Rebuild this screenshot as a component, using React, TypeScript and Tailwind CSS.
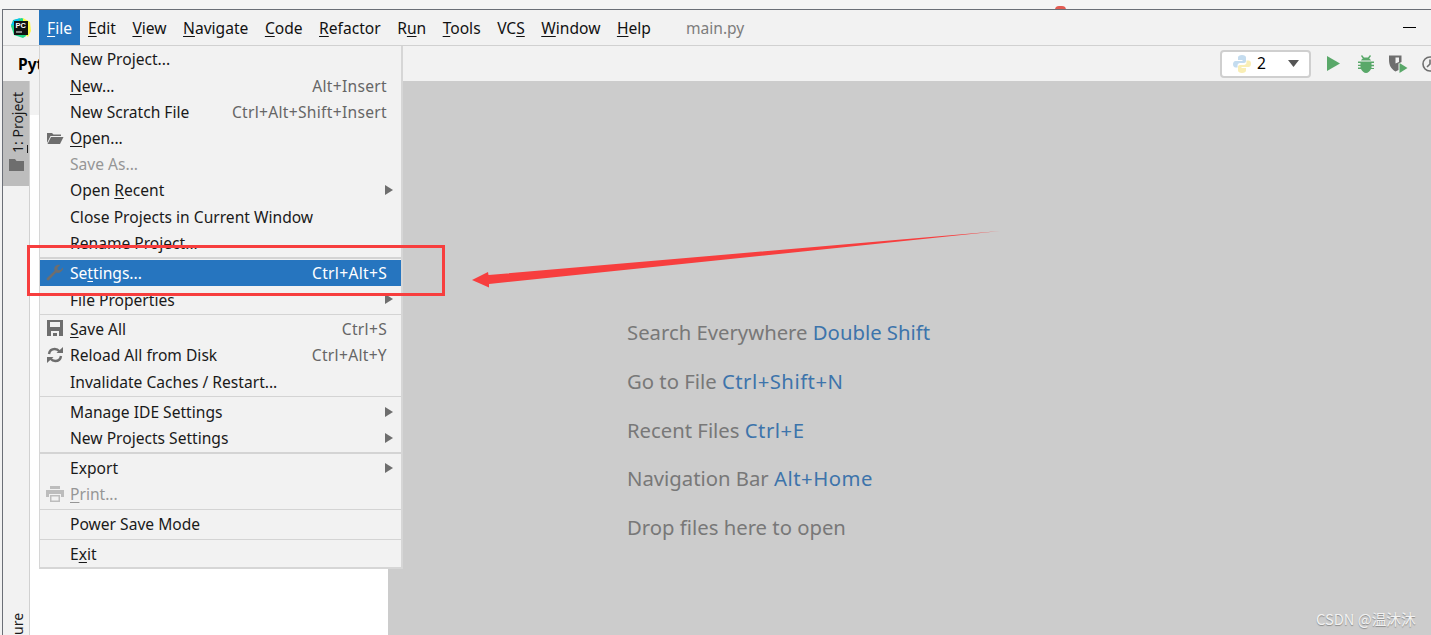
import React from 'react';

type Item = {
  label: React.ReactNode;
  shortcut?: string;
  arrow?: boolean;
  disabled?: boolean;
  active?: boolean;
  icon?: React.ReactNode;
  h: string;
};

type Group = {
  className: string;
  items: Item[];
};

const U = ({ children }: { children: React.ReactNode }) => (
  <span className="underline underline-offset-2">{children}</span>
);

const FolderOpen = () => (
  <svg width="18" height="14" viewBox="0 0 18 14" fill="#6e6e6e">
    <path d="M1 2h5l1.500 1.500H15V5H4.500L1 12z" />
    <path d="M5 6h12.500L14 13H1.500z" />
  </svg>
);

const Wrench = () => (
  <svg width="18" height="18" viewBox="0 0 18 18" fill="#6e6e6e">
    <path d="M17 3.600 14.200 6.300l-2.400-.2-.3-2.400L14.300 1c-2-.6-4.200 0-5.300 1.600-.9 1.300-1 2.800-.4 4.100L1 14.100c-.6.700-.5 1.500 0 2s1.400.6 2-.1l7.300-7.400c1.400.6 3 .4 4.300-.5 1.600-1.200 2.900-2.600 2.400-4.500z" />
  </svg>
);

const Floppy = () => (
  <svg width="16" height="16" viewBox="0 0 16 16" fill="#6e6e6e">
    <path d="M0 0h16v16H0z" />
    <path d="M3 2h10v5H3z" fill="#f2f2f2" />
    <path d="M4 11h8v5H4z" fill="#f2f2f2" />
    <path d="M6 13h4v3H6z" fill="#6e6e6e" />
  </svg>
);

const Reload = () => (
  <svg width="16" height="16" viewBox="0 0 16 16" fill="none" stroke="#6e6e6e" strokeWidth="2.400">
    <path d="M2 7c.4-3 2.800-5 5.800-5 1.900 0 3.400.8 4.600 2.200" />
    <path d="M14 9c-.4 3-2.800 5-5.800 5-1.900 0-3.400-.8-4.600-2.200" />
    <path d="M9.500 6H16V0z" fill="#6e6e6e" stroke="none" />
    <path d="M6.500 10H0v6z" fill="#6e6e6e" stroke="none" />
  </svg>
);

const Printer = () => (
  <svg width="18" height="16" viewBox="0 0 18 16" fill="#bdbdbd">
    <path d="M4 0h10v3H4z" />
    <path d="M0 4h18v7h-3V8H3v3H0z" />
    <path d="M4 9h10v7H4zM5.500 10.500v4h7v-4z" fillRule="evenodd" />
  </svg>
);

const PyCharmLogo = () => (
  <svg width="20" height="22" viewBox="0 0 20 22">
    <path d="M2 3 11 1l8 5-1 11-6 4-9-3-3-9z" fill="#21d789" />
    <path d="M12 1l7 4 1 9-3 6-5-4z" fill="#fcf84a" />
    <path d="M0 8l3-5 6-2-3 8z" fill="#07c3f2" />
    <path d="M3 4h14v14H3z" fill="#111" />
    <text x="4.500" y="10.500" fontSize="7.500" fontWeight="700" fill="#fff" fontFamily="'Liberation Sans', sans-serif">
      PC
    </text>
    <path d="M5 14.500h6v1H5z" fill="#fff" />
  </svg>
);

const PythonIcon = () => (
  <svg width="18" height="18" viewBox="0 0 18 18">
    <path d="M9 0C6.500 0 5 1 5 2.500V5h4.500v1H2.500C1 6 0 7.300 0 9.300S1 12.500 2.500 12.500H4.500V10.500C4.500 9 5.700 8 7 8h4c1.200 0 2-.9 2-2V2.500C13 1 11.500 0 9 0z" fill="#c4dcef" />
    <path d="M9 18c2.500 0 4-1 4-2.500V13H8.500v-1h7c1.500 0 2.500-1.300 2.500-3.300S17 5.500 15.500 5.500H13.500V7.500C13.500 9 12.300 10 11 10H7c-1.200 0-2 .9-2 2v3.500C5 17 6.500 18 9 18z" fill="#f9eeb5" />
  </svg>
);

const Bug = () => (
  <svg width="16" height="18" viewBox="0 0 16 18" fill="#59a869">
    <path d="M4 0l2 2.500h4L12 0l1 1-1.800 2.500c1 .5 1.600 1.200 1.800 2H3c.2-.8.8-1.500 1.800-2L3 1z" />
    <path d="M0 6.500h16v1.600h-2.500v1.600H16v1.600h-2.500v1.600H16V14h-3c-1 2.200-3 4-5 4s-4-1.800-5-4H0v-1.500h2.500v-1.600H0V9.700h2.500V8.100H0z" />
  </svg>
);

const Coverage = () => (
  <svg width="19" height="20" viewBox="0 0 19 20">
    <path d="M0 1.500h12.500V8l-3 1.500V16l-3 1.500C2 15 0 11 0 6z" fill="#6e6e6e" />
    <path d="M6.500 3.500H10V8L6.500 9.500z" fill="#f2f2f2" />
    <path d="M10.500 9l8 5-8 5z" fill="#59a869" />
  </svg>
);

const menuGroups: Group[] = [
  {
    className: '',
    items: [
      { label: 'New Project...', h: 'h-[26.2px]' },
      { label: <><U>N</U>ew...</>, shortcut: 'Alt+Insert', h: 'h-[26.2px]' },
      { label: 'New Scratch File', shortcut: 'Ctrl+Alt+Shift+Insert', h: 'h-[26.2px]' },
      { label: <><U>O</U>pen...</>, icon: <FolderOpen />, h: 'h-[26.2px]' },
      { label: 'Save As...', disabled: true, h: 'h-[26.2px]' },
      { label: <>Open <U>R</U>ecent</>, arrow: true, h: 'h-[26.2px]' },
      { label: 'Close Projects in Current Window', h: 'h-[26.2px]' },
      { label: 'Rename Project...', h: 'h-[26.2px]' },
    ],
  },
  {
    className: 'mt-[1.400px] border-t-2 pt-[1px]',
    items: [
      { label: <>Se<U>t</U>tings...</>, shortcut: 'Ctrl+Alt+S', active: true, icon: <Wrench />, h: 'h-[26px]' },
      { label: 'File Properties', arrow: true, h: 'h-[27px]' },
    ],
  },
  {
    className: 'mt-[1px] border-t',
    items: [
      { label: <><U>S</U>ave All</>, shortcut: 'Ctrl+S', icon: <Floppy />, h: 'h-[27px]' },
      { label: 'Reload All from Disk', shortcut: 'Ctrl+Alt+Y', icon: <Reload />, h: 'h-[26px]' },
      { label: 'Invalidate Caches / Restart...', h: 'h-[28px]' },
    ],
  },
  {
    className: 'border-t pt-[2px]',
    items: [
      { label: 'Manage IDE Settings', arrow: true, h: 'h-[26px]' },
      { label: 'New Projects Settings', arrow: true, h: 'h-[26px]' },
    ],
  },
  {
    className: 'mt-[1px] border-t-2 pt-[1px]',
    items: [
      { label: 'Export', arrow: true, h: 'h-[26px]' },
      { label: <><U>P</U>rint...</>, disabled: true, icon: <Printer />, h: 'h-[26px]' },
    ],
  },
  {
    className: 'mt-[2px] border-t',
    items: [{ label: 'Power Save Mode', h: 'h-[28px]' }],
  },
  {
    className: 'mt-[1px] border-t',
    items: [{ label: <>E<U>x</U>it</>, h: 'h-[27px]' }],
  },
];

const menuBar: React.ReactNode[] = [
  <><U>E</U>dit</>,
  <><U>V</U>iew</>,
  <><U>N</U>avigate</>,
  <><U>C</U>ode</>,
  <><U>R</U>efactor</>,
  <>R<U>u</U>n</>,
  <><U>T</U>ools</>,
  <>VC<U>S</U></>,
  <><U>W</U>indow</>,
  <><U>H</U>elp</>,
];

const hints: [string, string][] = [
  ['Search Everywhere', 'Double Shift'],
  ['Go to File', 'Ctrl+Shift+N'],
  ['Recent Files', 'Ctrl+E'],
  ['Navigation Bar', 'Alt+Home'],
  ['Drop files here to open', ''],
];

const MenuRow = ({ item }: { item: Item }) => {
  let color = 'text-[#1a1a1a]';
  if (item.disabled) color = 'text-[#969696]';
  if (item.active) color = 'text-white bg-[#2675bf]';
  return (
    <div className={`flex items-center ${item.h} ${color}`}>
      <div className="w-[30px] flex justify-center shrink-0">{item.icon}</div>
      <div className="flex-1 pt-[2px]">{item.label}</div>
      {item.shortcut && (
        <div className={`pt-[2px] pr-[14px] tracking-[0.3px] ${item.active ? 'text-white' : 'text-[#666]'}`}>{item.shortcut}</div>
      )}
      {item.arrow && (
        <div className="pr-[8px]">
          <svg width="8" height="10" viewBox="0 0 8 10" fill="#6e6e6e">
            <path d="M0 0l8 5-8 5z" />
          </svg>
        </div>
      )}
    </div>
  );
};

export default function App() {
  return (
    <div className="relative w-[1431px] h-[635px] overflow-hidden bg-[#f2f2f2] font-['Noto_Sans','Liberation_Sans',sans-serif] text-[15.600px]">
      {/* desktop strip above the window */}
      <div className="relative h-[9px] bg-[#f5f5f5] overflow-hidden">
        <div className="absolute left-[1055px] top-[6px] w-[11px] h-[8px] rounded-full bg-[#e25b52]" />
      </div>

      <div className="ml-[2px] h-[626px] border-l border-t border-[#6b6f77] flex flex-col">
        {/* menu bar */}
        <div className="h-[36px] flex items-center border-b border-[#d1d1d1] shrink-0">
          <div className="w-[36px] flex justify-center pt-[1px]">
            <PyCharmLogo />
          </div>
          <div className="w-[41px] h-full bg-[#2675bf] text-white flex items-center justify-center pt-[2px]">
            <span>
              <U>F</U>ile
            </span>
          </div>
          <div className="flex items-center gap-[16.500px] pl-[8px] pt-[2px] text-[#111]">
            {menuBar.map((m, i) => (
              <span key={i}>{m}</span>
            ))}
          </div>
          <span className="ml-[35px] pt-[2px] text-[#7d7d7d]">main.py</span>
          <div className="ml-auto mr-[15px] w-[13px] h-[1px] bg-black" />
        </div>

        {/* toolbar */}
        <div className="h-[35px] flex items-center shrink-0">
          <span className="pl-[15px] pt-[2px] font-bold text-black">Python</span>
          <div className="ml-auto mr-[-7px] flex items-center">
            <div className="w-[91px] h-[28px] rounded-[4px] border-2 border-[#cfcfcf] bg-white flex items-center pl-[11px] pr-[10px] text-black">
              <PythonIcon />
              <span className="ml-[6px]">2</span>
              <svg className="ml-auto" width="11" height="7" viewBox="0 0 11 7" fill="#555">
                <path d="M0 0h11L5.500 7z" />
              </svg>
            </div>
            <svg className="ml-[16px]" width="13" height="15" viewBox="0 0 13 15" fill="#59a869">
              <path d="M0 0l13 7.500L0 15z" />
            </svg>
            <div className="ml-[18px]">
              <Bug />
            </div>
            <div className="ml-[15px]">
              <Coverage />
            </div>
            <svg className="ml-[14px]" width="16" height="16" viewBox="0 0 16 16" fill="none" stroke="#6e6e6e" strokeWidth="1.600">
              <circle cx="8" cy="8" r="7" />
              <path d="M8 3.500V8l-3 3" />
            </svg>
          </div>
        </div>

        {/* body */}
        <div className="flex-1 flex min-h-0">
          <div className="w-[27px] shrink-0 border-r border-[#d1d1d1] flex flex-col justify-between">
            <div className="h-[105px] w-[26px] bg-[#bdbdbd] flex flex-col items-center pt-[12px] text-[#1a1a1a]">
              <span className="ml-[3px] [writing-mode:vertical-rl] rotate-180 text-[14px] leading-[26px] h-[60px] whitespace-nowrap">
                <U>1</U>: Project
              </span>
              <svg className="mt-[6px]" width="15" height="12" viewBox="0 0 15 12" fill="#6e6e6e">
                <path d="M0 0h6l1.500 2H15v10H0z" />
              </svg>
            </div>
            <span className="ml-[2px] [writing-mode:vertical-rl] rotate-180 text-[14px] leading-[26px] h-[22px] text-[#1a1a1a]">
              ure
            </span>
          </div>
          <div className="w-[358px] shrink-0 bg-white">
            <div className="h-[34px] bg-[#f2f2f2]" />
          </div>
          <div className="flex-1 bg-[#cccccc] pl-[239px] pt-[237px] text-[20.300px] text-[#787878] leading-[28px] flex flex-col gap-[20.800px]">
            {hints.map(([t, k]) => (
              <div key={t}>
                {t} <span className={`text-[#3d74ab] ${k.includes('+') ? 'tracking-[0.5px]' : ''}`}>{k}</span>
              </div>
            ))}
          </div>
        </div>
      </div>

      {/* open File menu */}
      <div className="absolute left-[39px] top-[46px] w-[364px] bg-[#f2f2f2] border-l border-[#d6d6d6] border-r-2 border-r-[#d6d6d6] border-b-2 border-b-[#d6d6d6]">
        {menuGroups.map((g, i) => (
          <div key={i} className={`border-[#d4d4d4] ${g.className}`}>
            {g.items.map((item, j) => (
              <MenuRow key={j} item={item} />
            ))}
          </div>
        ))}
      </div>

      {/* red annotation */}
      <div className="absolute left-[27px] top-[245px] w-[418px] h-[51px] border-[3px] border-[#f73e3e]" />
      <svg className="absolute left-[460px] top-[220px]" width="550" height="80" viewBox="0 0 550 80">
        <path d="M540 11 28.500 55 28 52 12 60 29 67.500 29 64z" fill="#f73e3e" />
      </svg>

      <div className="absolute left-[1316px] top-[608px] text-[14.700px] text-[#f2f2f2] [text-shadow:0_1px_1px_#8a8a8a] font-['Noto_Sans_CJK_SC',sans-serif]">
        CSDN @温沐沐
      </div>
    </div>
  );
}
